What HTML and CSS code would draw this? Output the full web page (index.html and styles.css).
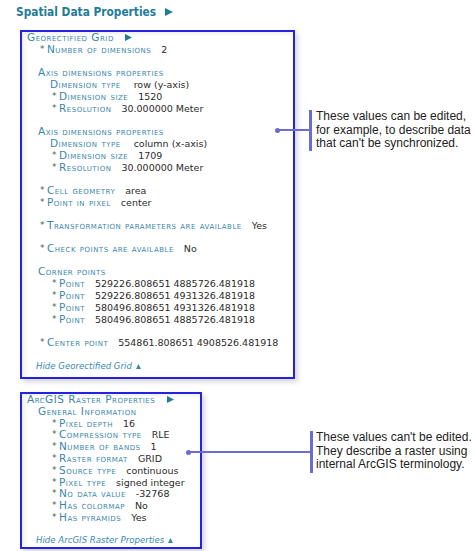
FILE: index.html
```html
<!DOCTYPE html>
<html>
<head>
<meta charset="utf-8">
<link rel="stylesheet" href="styles.css">
</head>
<body>
<div class="page">
  <div class="title">Spatial Data Properties<svg class="tri-r big" viewBox="0 0 8 8"><polygon points="0,0 8,4 0,8"/></svg></div>

  <div class="panel p1">
    <div class="grp">
      <div class="row head"><span class="k">Georectified Grid</span><svg class="tri-r hd1" viewBox="0 0 8 8"><polygon points="0,0 8,4 0,8"/></svg></div>
      <div class="row l1"><span class="b">*</span><span class="k">Number of dimensions</span><span class="v">2</span></div>
    </div>
    <div class="grp">
      <div class="row sub"><span class="k">Axis dimensions properties</span></div>
      <div class="row l2n"><span class="k">Dimension type</span><span class="v w13">row (y-axis)</span></div>
      <div class="row l2"><span class="b">*</span><span class="k">Dimension size</span><span class="v">1520</span></div>
      <div class="row l2"><span class="b">*</span><span class="k">Resolution</span><span class="v">30.000000 Meter</span></div>
    </div>
    <div class="grp">
      <div class="row sub"><span class="k">Axis dimensions properties</span></div>
      <div class="row l2n"><span class="k">Dimension type</span><span class="v w13">column (x-axis)</span></div>
      <div class="row l2"><span class="b">*</span><span class="k">Dimension size</span><span class="v">1709</span></div>
      <div class="row l2"><span class="b">*</span><span class="k">Resolution</span><span class="v">30.000000 Meter</span></div>
    </div>
    <div class="grp">
      <div class="row l1"><span class="b">*</span><span class="k">Cell geometry</span><span class="v">area</span></div>
      <div class="row l1"><span class="b">*</span><span class="k">Point in pixel</span><span class="v">center</span></div>
    </div>
    <div class="grp">
      <div class="row l1"><span class="b">*</span><span class="k">Transformation parameters are available</span><span class="v">Yes</span></div>
    </div>
    <div class="grp">
      <div class="row l1"><span class="b">*</span><span class="k">Check points are available</span><span class="v">No</span></div>
    </div>
    <div class="grp">
      <div class="row sub"><span class="k">Corner points</span></div>
      <div class="row l2"><span class="b">*</span><span class="k">Point</span><span class="v">529226.808651 4885726.481918</span></div>
      <div class="row l2"><span class="b">*</span><span class="k">Point</span><span class="v">529226.808651 4931326.481918</span></div>
      <div class="row l2"><span class="b">*</span><span class="k">Point</span><span class="v">580496.808651 4931326.481918</span></div>
      <div class="row l2"><span class="b">*</span><span class="k">Point</span><span class="v">580496.808651 4885726.481918</span></div>
    </div>
    <div class="grp">
      <div class="row l1"><span class="b">*</span><span class="k">Center point</span><span class="v">554861.808651 4908526.481918</span></div>
    </div>
    <div class="grp">
      <div class="row hide">Hide Georectified Grid<svg class="tri-u" viewBox="0 0 6 6"><polygon points="0,6 3,0 6,6"/></svg></div>
    </div>
  </div>

  <div class="panel p2">
    <div class="grp">
      <div class="row head"><span class="k">ArcGIS Raster Properties</span><svg class="tri-r hd2" viewBox="0 0 8 8"><polygon points="0,0 8,4 0,8"/></svg></div>
      <div class="row sub"><span class="k">General Information</span></div>
      <div class="row l2"><span class="b">*</span><span class="k">Pixel depth</span><span class="v">16</span></div>
      <div class="row l2"><span class="b">*</span><span class="k">Compression type</span><span class="v">RLE</span></div>
      <div class="row l2"><span class="b">*</span><span class="k">Number of bands</span><span class="v">1</span></div>
      <div class="row l2"><span class="b">*</span><span class="k">Raster format</span><span class="v">GRID</span></div>
      <div class="row l2"><span class="b">*</span><span class="k">Source type</span><span class="v">continuous</span></div>
      <div class="row l2"><span class="b">*</span><span class="k">Pixel type</span><span class="v">signed integer</span></div>
      <div class="row l2"><span class="b">*</span><span class="k">No data value</span><span class="v">-32768</span></div>
      <div class="row l2"><span class="b">*</span><span class="k">Has colormap</span><span class="v">No</span></div>
      <div class="row l2"><span class="b">*</span><span class="k">Has pyramids</span><span class="v">Yes</span></div>
    </div>
    <div class="grp">
      <div class="row hide">Hide ArcGIS Raster Properties<svg class="tri-u" viewBox="0 0 6 6"><polygon points="0,6 3,0 6,6"/></svg></div>
    </div>
  </div>

  <div class="callout c1">
    <span class="dot"></span><span class="wire"></span><span class="bar"></span>
    <div class="note">These values can be edited,<br>for example, to describe data<br>that can't be synchronized.</div>
  </div>
  <div class="callout c2">
    <span class="dot"></span><span class="wire"></span><span class="bar"></span>
    <div class="note">These values can't be edited.<br>They describe a raster using<br>internal ArcGIS terminology.</div>
  </div>
</div>
</body>
</html>
```

FILE: styles.css
```css
html, body {
  margin: 0;
  padding: 0;
  background: #ffffff;
}

.page {
  position: relative;
  width: 474px;
  height: 551px;
  overflow: hidden;
  font-family: "DejaVu Sans", Verdana, sans-serif;
  color: #2b2b2b;
}

.title {
  padding: 4px 0 0 16px;
  height: 16px;
  line-height: 16px;
  font-family: "DejaVu Sans Condensed", "DejaVu Sans", sans-serif;
  font-weight: bold;
  font-size: 11.8px;
  color: #1f7b9c;
  white-space: nowrap;
}

.tri-r {
  display: inline-block;
  fill: #1f7b9c;
}

.tri-r.big {
  width: 8px;
  height: 8px;
  margin-left: 9px;
  vertical-align: 0px;
}

.tri-r.hd1 {
  width: 7px;
  height: 7px;
  margin-left: 11px;
  vertical-align: 0px;
}

.tri-r.hd2 {
  width: 7px;
  height: 7px;
  margin-left: 12px;
  vertical-align: 0px;
}

.tri-u {
  display: inline-block;
  width: 5px;
  height: 5px;
  margin-left: 4px;
  fill: #2f8fa8;
  vertical-align: 0px;
}

.panel {
  box-sizing: border-box;
  margin-left: 20px;
  border: 2px solid #2222e0;
  background: #ffffff;
  box-shadow: 3px 3px 5px rgba(0, 0, 0, 0.16), inset 3px 2px 4px rgba(0, 0, 0, 0.07);
}

.p1 {
  width: 275px;
  margin-top: 10px;
  padding-bottom: 5px;
  line-height: 12px;
}

.p2 {
  width: 182px;
  margin-top: 13px;
  line-height: 11.8px;
}

.grp + .grp {
  margin-top: 11px;
}

.p2 .grp + .grp {
  margin-top: 11.2px;
}

.row {
  white-space: nowrap;
  font-size: 9.5px;
}

.head { padding-left: 5px; }
.sub  { padding-left: 16px; }
.l1   { padding-left: 18px; }
.l2n  { padding-left: 28px; }
.l2   { padding-left: 30px; }
.hide { padding-left: 14px; }

.k {
  font-size: 10.5px;
  line-height: 0;
  font-variant: small-caps;
  letter-spacing: 0.5px;
  color: #3a86aa;
}

.b {
  display: inline-block;
  width: 7px;
  font-size: 9px;
  line-height: 0;
  color: #3d6650;
  vertical-align: 1px;
}

.v {
  margin-left: 10px;
  color: #2b2b2b;
}

.v.w13 { margin-left: 13px; }

.hide {
  font-size: 8.6px;
  font-style: italic;
  color: #3a8ab0;
}

.callout {
  position: absolute;
  left: 0;
  top: 0;
}

.dot {
  position: absolute;
  width: 5px;
  height: 5px;
  border-radius: 50%;
  background: #6b6bd2;
}

.wire {
  position: absolute;
  height: 2px;
  background: #6b6bd2;
}

.bar {
  position: absolute;
  width: 3px;
  background: #6b6bd2;
}

.note {
  position: absolute;
  left: 316px;
  font-family: "Liberation Sans", Arial, sans-serif;
  font-size: 12px;
  line-height: 13.5px;
  color: #222222;
  white-space: nowrap;
}

.c1 .dot  { left: 275px; top: 128px; }
.c1 .wire { left: 277px; top: 129px; width: 33px; }
.c1 .bar  { left: 309px; top: 110px; height: 41px; }
.c1 .note { top: 110px; }

.c2 .dot  { left: 186px; top: 450px; }
.c2 .wire { left: 188px; top: 451px; width: 122px; }
.c2 .bar  { left: 310px; top: 431px; height: 42px; }
.c2 .note { top: 431px; }
```
